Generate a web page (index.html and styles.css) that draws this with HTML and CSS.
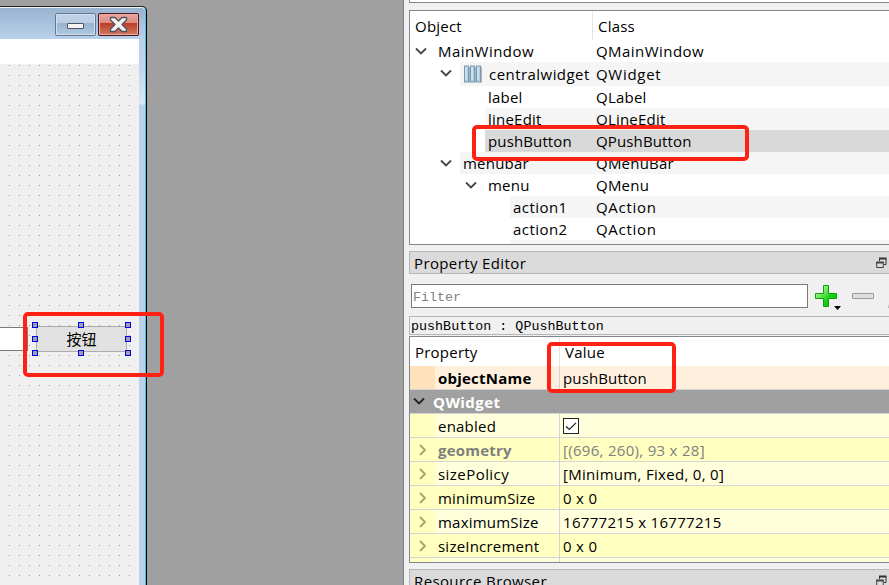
FILE: index.html
```html
<!DOCTYPE html>
<html lang="zh">
<head>
    <meta charset="UTF-8">
    <title>Qt Designer</title>
    <link rel="stylesheet" href="styles.css">
</head>
<body>

    <div class="designer">
        <main class="workspace">
            <div class="form-window">
                <div class="titlebar">
                    <span class="win-btn">
                        <svg width="41" height="23" viewBox="0 0 41 23"><rect x="12.5" y="10.5" width="16" height="5" rx="0.5" fill="#f4f4f4" stroke="#4d5363"/></svg>
                    </span>
                    <span class="win-btn close">
                        <svg width="41" height="23" viewBox="0 0 41 23"><path d="M12.500 4.500h4.500l3.500 3.500 3.500-3.500h4.500v2.500l-4.500 4.500 4.500 4.500v2.500h-4.500l-3.500-3.500-3.500 3.500h-4.500v-2.500l4.500-4.500-4.500-4.500z" fill="#f1f1f1" stroke="#4d5363" stroke-width="1.3" stroke-linejoin="round"/></svg>
                    </span>
                </div>
                <div class="client">
                    <div class="form-menubar"></div>
                    <div class="form-canvas">
                        <div class="line-edit"></div>
                        <div class="push-button">按钮</div>
                        <i class="handle l t"></i><i class="handle c t"></i><i class="handle r t"></i>
                        <i class="handle l m"></i><i class="handle r m"></i>
                        <i class="handle l b"></i><i class="handle c b"></i><i class="handle r b"></i>
                    </div>
                </div>
            </div>
        </main>

        <aside class="dock">
            <div class="widget-box"></div>

            <section class="object-tree">
                <div class="tree-head"><span class="name">Object</span><span class="type">Class</span></div>
                <div class="tree-row level-1">
                    <svg class="arrow" width="12" height="8" viewBox="0 0 12 8"><path d="M1 1.5L6 6.5L11 1.5"/></svg>
                    <span class="name wide">MainWindow</span><span class="type wide">QMainWindow</span>
                </div>
                <div class="tree-row level-2 tall alt">
                    <svg class="arrow" width="12" height="8" viewBox="0 0 12 8"><path d="M1 1.5L6 6.5L11 1.5"/></svg>
                    <span class="name wide"><svg class="layout-icon" width="18" height="18" viewBox="0 0 18 18"><g fill="#a5d3ee" stroke="#8497a8"><rect x="0.5" y="1" width="4" height="16"/><rect x="6.5" y="1" width="4" height="16"/><rect x="12.5" y="1" width="4" height="16"/></g><path d="M2 2v13M8 2v13M14 2v13" stroke="#dff3fd"/><path d="M5.5 2v15.500M11.500 2v15.500M17.500 2v15.500" stroke="#aab4bd"/></svg>centralwidget</span><span class="type widest">QWidget</span>
                </div>
                <div class="tree-row level-3"><span class="name">label</span><span class="type">QLabel</span></div>
                <div class="tree-row level-3 alt"><span class="name">lineEdit</span><span class="type">QLineEdit</span></div>
                <div class="tree-row level-3 selected"><span class="name">pushButton</span><span class="type">QPushButton</span></div>
                <div class="tree-row level-2 alt">
                    <svg class="arrow" width="12" height="8" viewBox="0 0 12 8"><path d="M1 1.5L6 6.5L11 1.5"/></svg>
                    <span class="name">menubar</span><span class="type">QMenuBar</span>
                </div>
                <div class="tree-row level-3">
                    <svg class="arrow" width="12" height="8" viewBox="0 0 12 8"><path d="M1 1.5L6 6.5L11 1.5"/></svg>
                    <span class="name">menu</span><span class="type">QMenu</span>
                </div>
                <div class="tree-row level-4 alt"><span class="name wide">action1</span><span class="type widest">QAction</span></div>
                <div class="tree-row level-4"><span class="name wide">action2</span><span class="type widest">QAction</span></div>
                <div class="tree-row level-4 alt cut"><span class="name"></span></div>
            </section>

            <div class="dock-title">
                <span>Property Editor</span>
                <svg class="float-icon" width="11" height="12" viewBox="0 0 11 12"><path d="M3.5 4V1.5h6.500v6H8" fill="none" stroke="#333"/><path d="M3 1.5h7.500" stroke="#333" stroke-width="2"/><rect x="0.700" y="5.500" width="6.500" height="5" fill="#ddd" stroke="#444"/><path d="M0.200 5.500h7.500" stroke="#444" stroke-width="2"/></svg>
            </div>

            <div class="filter-bar">
                <div class="filter">Filter</div>
                <svg class="tools" width="81" height="30" viewBox="0 0 81 30">
                    <defs>
                        <linearGradient id="green" x1="0" y1="0" x2="1" y2="1"><stop offset="0.2" stop-color="#a5f58b"/><stop offset="0.6" stop-color="#16d316"/><stop offset="1" stop-color="#08b008"/></linearGradient>
                    </defs>
                    <path d="M15.5 4.5h5v8h8v5h-8v8h-5v-8h-8v-5h8z" fill="url(#green)" stroke="#159c15"/>
                    <path d="M26 25h7l-3.500 4z" fill="#000"/>
                    <rect x="44.5" y="12.5" width="21" height="5" rx="0.5" fill="#dedede" stroke="#9b9b9b"/>
                    <path d="M81 23v4h-1z" fill="#aaa"/>
                </svg>
            </div>

            <div class="object-label">pushButton : QPushButton</div>

            <section class="properties">
                <div class="prop-head"><span class="key">Property</span><span class="value">Value</span></div>
                <div class="prop-row orange">
                    <span class="gutter"></span><span class="key bold">objectName</span><span class="value narrow">pushButton</span>
                </div>
                <div class="prop-group">
                    <svg class="arrow" width="12" height="8" viewBox="0 0 12 8"><path d="M1 1.5L6 6.5L11 1.5"/></svg>
                    <span class="wide">QWidget</span>
                </div>
                <div class="prop-row light">
                    <span class="gutter"></span><span class="key">enabled</span>
                    <span class="value"><svg class="check" width="16" height="16" viewBox="0 0 16 16"><rect x="0.5" y="0.5" width="15" height="15" fill="#fff" stroke="#222"/><path d="M3 8.500l3.300 3L13 4.800" fill="none" stroke="#222" stroke-width="1.2"/></svg></span>
                </div>
                <div class="prop-row dark muted">
                    <span class="gutter"><svg width="8" height="12" viewBox="0 0 8 12"><path d="M1 1l5 5-5 5"/></svg></span>
                    <span class="key bold">geometry</span><span class="value">[(696, 260), 93 x 28]</span>
                </div>
                <div class="prop-row light">
                    <span class="gutter"><svg width="8" height="12" viewBox="0 0 8 12"><path d="M1 1l5 5-5 5"/></svg></span>
                    <span class="key wide">sizePolicy</span><span class="value">[Minimum, Fixed, 0, 0]</span>
                </div>
                <div class="prop-row dark">
                    <span class="gutter"><svg width="8" height="12" viewBox="0 0 8 12"><path d="M1 1l5 5-5 5"/></svg></span>
                    <span class="key">minimumSize</span><span class="value">0 x 0</span>
                </div>
                <div class="prop-row light">
                    <span class="gutter"><svg width="8" height="12" viewBox="0 0 8 12"><path d="M1 1l5 5-5 5"/></svg></span>
                    <span class="key">maximumSize</span><span class="value">16777215 x 16777215</span>
                </div>
                <div class="prop-row dark">
                    <span class="gutter"><svg width="8" height="12" viewBox="0 0 8 12"><path d="M1 1l5 5-5 5"/></svg></span>
                    <span class="key">sizeIncrement</span><span class="value">0 x 0</span>
                </div>
                <div class="prop-row light cut"><span class="gutter"></span><span class="key"></span><span class="value"></span></div>
            </section>

            <div class="dock-title">
                <span>Resource Browser</span>
                <svg class="float-icon" width="11" height="12" viewBox="0 0 11 12"><path d="M3.5 4V1.5h6.500v6H8" fill="none" stroke="#333"/><path d="M3 1.5h7.500" stroke="#333" stroke-width="2"/><rect x="0.700" y="5.500" width="6.500" height="5" fill="#ddd" stroke="#444"/><path d="M0.200 5.500h7.500" stroke="#444" stroke-width="2"/></svg>
            </div>
        </aside>

        <div class="mark mark-form"></div>
        <div class="mark mark-tree"></div>
        <div class="mark mark-value"></div>
    </div>

</body>
</html>
```

FILE: styles.css
```css
* {
    box-sizing: border-box;
}

body {
    margin: 0;
    overflow: hidden;
    font-family: "Open Sans", "Noto Sans CJK SC", sans-serif;
    font-size: 15px;
    color: #000;
    white-space: nowrap;
}

svg {
    display: block;
    flex: none;
}

.designer {
    position: relative;
    display: flex;
    width: 889px;
    height: 585px;
    overflow: hidden;
}

/* form being edited */
.workspace {
    width: 404px;
    flex: none;
    padding-top: 6px;
    background: #a0a0a0;
    border-right: 1px solid #808080;
}

.form-window {
    width: 147px;
    height: 579px;
    border-top: 1px solid #222;
    border-right: 1px solid #000;
    border-top-right-radius: 5px;
    background: linear-gradient(#99b4d1, #b9d1ea 32px, #bfd5ec 60px, #dae7f5 97px, #b9d1ea 98px);
    box-shadow: inset -1px 1px 0 #4fc4e0;
}

.titlebar {
    display: flex;
    gap: 2px;
    height: 32px;
    padding: 5px 0 0 55px;
    margin-right: 1px;
    background: linear-gradient(#99b4d1, #b9d1ea);
    border-top: 1px solid #eef5fb;
    border-top-right-radius: 4px;
}

.win-btn {
    width: 41px;
    height: 23px;
    border-radius: 2px;
    background: linear-gradient(#c1d4e8, #b9cee4 10px, #98b1cd 10px, #b3cce5);
    box-shadow: inset 0 0 0 1px #65788f, inset 0 0 0 2px #cfdfef;
}

.win-btn.close {
    background: linear-gradient(#e8aaa0, #dc8c80 10px, #b93b25 10px, #d47f66);
    box-shadow: inset 0 0 0 1px #4e1420, inset 0 0 0 2px #e7aca2;
}

.client {
    width: 139px;
    height: 546px;
}

.form-menubar {
    height: 25px;
    background: #fff;
}

/* 10px grid of dots */
.form-canvas {
    position: relative;
    height: 521px;
    background-color: #f0f0f0;
    background-image: conic-gradient(from 0deg at 1px 1px, transparent 75%, #999 0);
    background-size: 10px 10px;
    background-position: 9px 1px;
}

.line-edit,
.push-button,
.handle {
    position: absolute;
}

.line-edit {
    left: -5px;
    top: 263px;
    width: 33px;
    height: 24px;
    background: #fff;
    border: 1px solid #7a7a7a;
}

.push-button {
    left: 36px;
    top: 262px;
    width: 91px;
    height: 26px;
    border: 1px solid #adadad;
    background: #e1e1e1;
    font: 15px/24px "Noto Sans CJK SC", sans-serif;
    text-align: center;
}

.handle {
    width: 6px;
    height: 6px;
    border: 1px solid #0000f0;
    background: #a0a0a0;
}

.l { left: 32px; }
.c { left: 78px; }
.r { left: 125px; }
.t { top: 258px; }
.m { top: 272px; }
.b { top: 286px; }

/* right side docks */
.dock {
    flex: 1;
    display: flex;
    flex-direction: column;
    padding-left: 5px;
    background: #f0f0f0;
    letter-spacing: 0.22px;
}

.wide {
    letter-spacing: 0.45px;
}

.widest {
    letter-spacing: 0.7px;
}

.widget-box {
    height: 3px;
    flex: none;
    margin-bottom: 7px;
    background: #fff;
    border: solid #828790;
    border-width: 0 0 1px 1px;
}

.object-tree {
    height: 235px;
    flex: none;
    border: 1px solid #828790;
    border-right: 0;
    background: #fff;
    overflow: hidden;
}

.tree-head {
    display: flex;
    height: 29px;
    line-height: 31px;
}

.tree-head .name {
    width: 183px;
    padding-left: 5px;
    border-right: 1px solid #e5e5e5;
}

.tree-head .type {
    padding-left: 5px;
}

.tree-row {
    display: flex;
    height: 22px;
    line-height: 22px;
}

.tree-row.tall {
    height: 24px;
    line-height: 24px;
}

.tree-row.cut {
    height: 4px;
}

.tree-row .arrow {
    margin: 7px 8px 0 -20px;
}

.arrow path {
    fill: none;
    stroke: #444;
    stroke-width: 1.8;
}

.tree-row .name {
    flex: none;
    display: flex;
    align-items: center;
    padding-left: 3px;
}

.tree-row .type {
    flex: 1;
    padding-left: 3px;
}

.level-1 { padding-left: 25px; }
.level-2 { padding-left: 50px; }
.level-3 { padding-left: 75px; }
.level-4 { padding-left: 100px; }
.level-1 .name { width: 158px; }
.level-2 .name { width: 133px; }
.level-3 .name { width: 108px; }
.level-4 .name { width: 83px; }

.alt .name,
.alt .type {
    background: #f5f5f5;
}

.alt.cut .name {
    width: 379px;
}

.selected .name,
.selected .type {
    background: #d9d9d9;
}

.selected,
.narrow {
    letter-spacing: 0.13px;
}

.layout-icon {
    margin: 0 7px 0 1px;
}

.dock-title {
    display: flex;
    justify-content: space-between;
    flex: none;
    height: 23px;
    margin-top: 6px;
    padding-left: 4px;
    border: 1px solid #b6b6b6;
    border-right: 0;
    background: #dadada;
    line-height: 23px;
    letter-spacing: 0.38px;
}

.float-icon {
    margin: 5px 2px 0 0;
}

.filter-bar {
    display: flex;
    flex: none;
    height: 42px;
    padding: 10px 0 0 2px;
}

.filter {
    width: 397px;
    height: 24px;
    padding-left: 1px;
    border: 1px solid #7a7a7a;
    background: #fff;
    color: #808080;
    font: 13.33px/25px "Liberation Mono", monospace;
    letter-spacing: 0;
}

.tools {
    margin-top: -3px;
}

.object-label {
    flex: none;
    height: 19px;
    padding-left: 1px;
    border: 1px solid #b6b6b6;
    border-right: 0;
    font: 13.33px/19px "Liberation Mono", monospace;
    letter-spacing: 0.03px;
}

.properties {
    flex: none;
    height: 227px;
    margin-top: 1px;
    border: 1px solid #828790;
    border-right: 0;
    background: #fff;
    overflow: hidden;
}

.prop-head {
    display: flex;
    height: 29px;
    line-height: 31px;
}

.prop-head .key {
    width: 150px;
    padding-left: 5px;
    border-right: 1px solid #e5e5e5;
}

.prop-head .value {
    padding-left: 5px;
}

.prop-row {
    display: flex;
    height: 24px;
    line-height: 25px;
    border-bottom: 1px solid #d4d4d4;
}

.prop-row.cut {
    border-bottom: 0;
}

.prop-row .gutter {
    width: 25px;
    padding: 6px 0 0 9px;
}

.gutter path {
    fill: none;
    stroke: #a5a566;
    stroke-width: 1.8;
}

.prop-row .key {
    width: 125px;
    padding-left: 3px;
    border-right: 1px solid #d4d4d4;
}

.prop-row .value {
    padding-left: 3px;
}

.light .value,
.dark .value {
    letter-spacing: 0.3px;
}

.bold {
    font-weight: 700;
}

.orange { background: #fff0de; }
.orange .gutter { background: #ffe2b9; }
.light { background: #ffffdc; }
.light .gutter,
.dark { background: #ffffbf; }
.muted { color: #808080; }

.prop-group {
    display: flex;
    height: 24px;
    padding-left: 3px;
    gap: 8px;
    background: #a0a0a0;
    border-bottom: 1px solid #d4d4d4;
    color: #fff;
    font-weight: 700;
    line-height: 25px;
}

.prop-group .arrow {
    margin-top: 7px;
}

.prop-group .arrow path {
    stroke: #222;
}

.check {
    margin-top: 4px;
}

/* red callouts */
.mark {
    position: absolute;
    border: 4px solid #ff2113;
    border-radius: 5px;
}

.mark-form {
    left: 23px;
    top: 312px;
    width: 141px;
    height: 65px;
}

.mark-tree {
    left: 472px;
    top: 125px;
    width: 277px;
    height: 36px;
}

.mark-value {
    left: 547px;
    top: 342px;
    width: 129px;
    height: 51px;
}
```
